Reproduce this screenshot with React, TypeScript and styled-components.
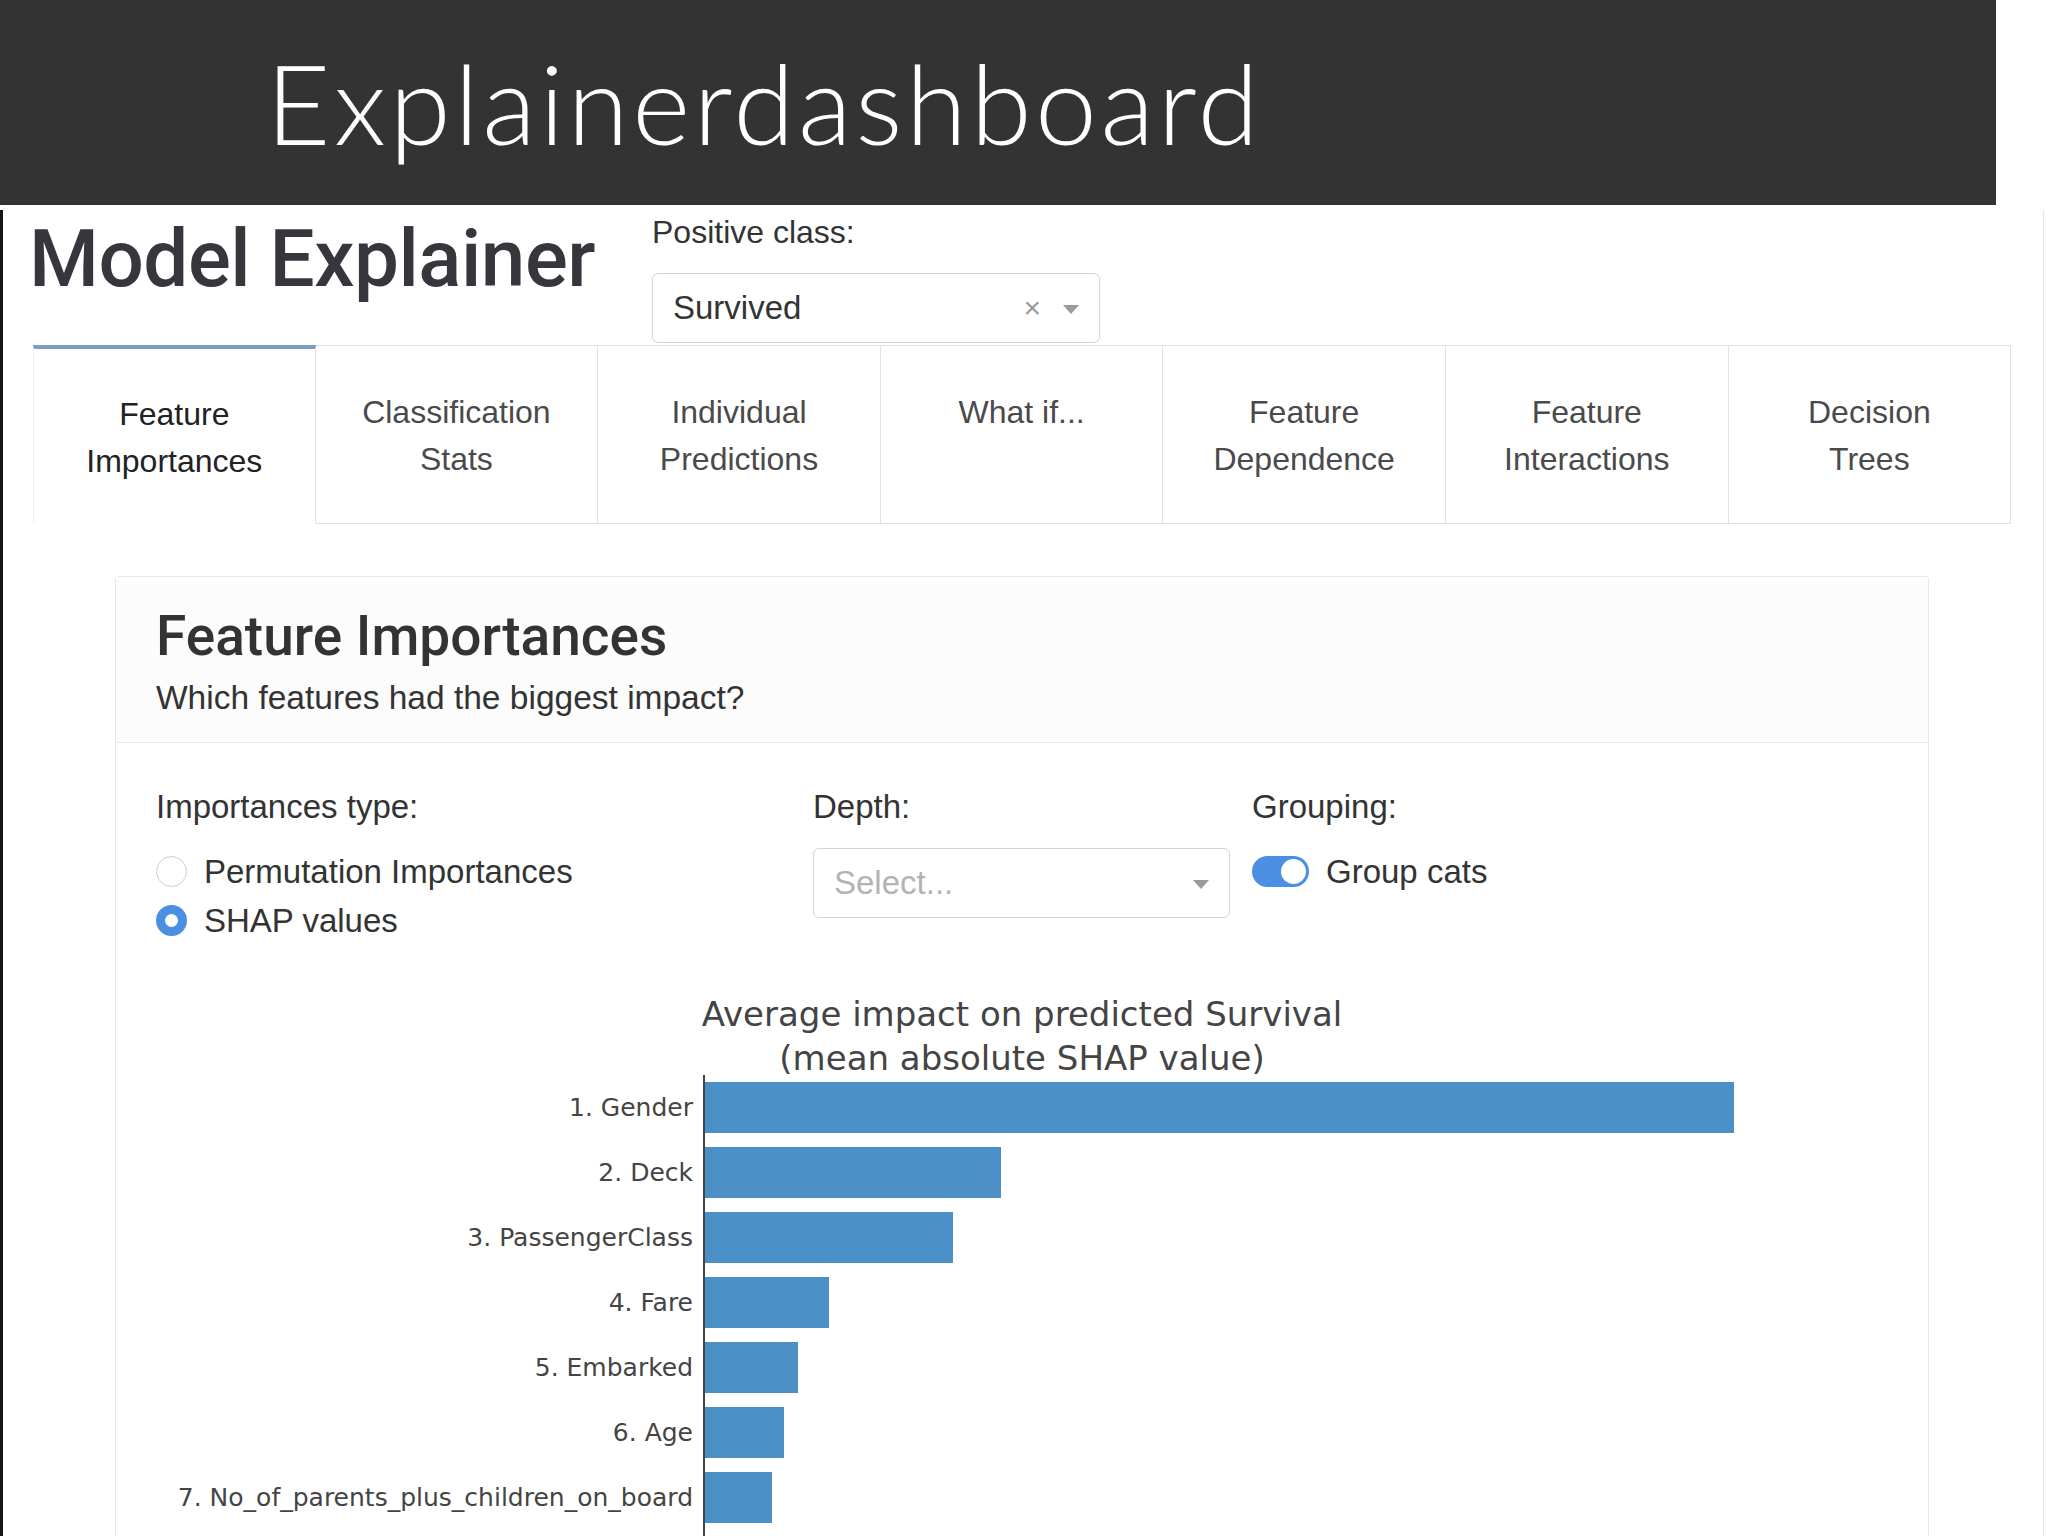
import styled, { createGlobalStyle } from 'styled-components'

const GlobalStyle = createGlobalStyle`
  html, body {
    margin: 0;
    padding: 0;
  }
  body {
    width: 2048px;
    height: 1536px;
    overflow: hidden;
    background: #fff;
    font-family: "Liberation Sans", Arial, sans-serif;
    color: #333;
  }
  * {
    box-sizing: border-box;
  }
`

const Banner = styled.header`
  width: 1996px;
  height: 205px;
  background: #333333;
  display: flex;
  align-items: center;
  padding-left: 266px;
`

const BannerTitle = styled.h1`
  margin: 0;
  font-family: Lato, "Open Sans", sans-serif;
  font-weight: 300;
  font-size: 111px;
  line-height: 1;
  color: #fff;
  letter-spacing: 3.5px;
`

const Page = styled.main`
  width: 2044px;
  height: 1331px;
  margin-top: 5px;
  padding: 3px 0 0 30px;
  border-left: 3px solid #161616;
  border-right: 1px solid #e6e6e6;
  overflow: hidden;
`

const TopRow = styled.div`
  display: flex;
  align-items: flex-start;
  height: 132px;
`

const AppTitle = styled.h2`
  width: 623px;
  margin: 6px 0 0 -4px;
  font-family: Roboto, "Liberation Sans", sans-serif;
  font-weight: 500;
  font-size: 80px;
  line-height: 80px;
  color: #35373c;
  letter-spacing: -0.5px;
`

const FormGroup = styled.div`
  display: flex;
  flex-direction: column;
`

const Label = styled.label`
  font-size: 32px;
  line-height: 38px;
  color: #333;
`

const SelectBox = styled.div<{ $width: number; $mt: number }>`
  width: ${(p) => p.$width}px;
  height: 70px;
  margin-top: ${(p) => p.$mt}px;
  border: 1px solid #d3d3d3;
  border-radius: 6px;
  display: flex;
  align-items: center;
  padding: 0 20px;
  background: #fff;
`

const SelectValue = styled.span<{ $placeholder?: boolean }>`
  flex: 1;
  font-size: 33px;
  color: ${(p) => (p.$placeholder ? '#b3b3b3' : '#333')};
`

const ClearMark = styled.span`
  font-size: 30px;
  color: #9a9a9a;
  margin-right: 22px;
`

const Caret = styled.span`
  width: 0;
  height: 0;
  border-left: 8px solid transparent;
  border-right: 8px solid transparent;
  border-top: 9px solid #9a9a9a;
  margin-top: 3px;
`

const Tabs = styled.nav`
  display: grid;
  grid-template-columns: repeat(7, 282.6px);
`

const Tab = styled.div<{ $active?: boolean; $first?: boolean }>`
  height: 179px;
  padding-top: ${(p) => (p.$active ? 42 : 43)}px;
  text-align: center;
  font-size: 32px;
  line-height: 47px;
  color: ${(p) => (p.$active ? '#222' : '#4a4a4a')};
  border-top: ${(p) => (p.$active ? '4px solid #7a9cc2' : '1px solid #e1e1e1')};
  border-right: 1px solid #e1e1e1;
  border-bottom: ${(p) => (p.$active ? '1px solid transparent' : '1px solid #e1e1e1')};
  border-left: ${(p) => (p.$first ? '1px solid #efefef' : 'none')};
`

const Card = styled.section`
  width: 1814px;
  margin: 52px 0 0 82px;
  height: 1100px;
  border: 1px solid #e8e8e8;
  border-bottom: none;
  border-radius: 4px 4px 0 0;
`

const CardHeader = styled.div`
  padding: 26px 40px 24px;
  background: #fcfcfc;
  border-bottom: 1px solid #e8e8e8;
`

const CardTitle = styled.h3`
  margin: 0;
  font-family: Roboto, "Liberation Sans", sans-serif;
  font-weight: 500;
  font-size: 55px;
  line-height: 66px;
  color: #333;
`

const CardSubtitle = styled.div`
  margin-top: 9px;
  font-size: 33.5px;
  line-height: 40px;
  color: #333;
`

const CardBody = styled.div`
  padding: 44px 40px 0;
`

const Controls = styled.div`
  display: grid;
  grid-template-columns: 657px 439px 1fr;
`

const Column = styled.div`
  display: flex;
  flex-direction: column;
`

const ControlLabel = styled.div`
  font-size: 33px;
  line-height: 40px;
  color: #333;
  margin-bottom: 20px;
`

const OptionRow = styled.div`
  display: flex;
  align-items: center;
  gap: 17px;
  height: 49px;
  font-size: 33px;
  color: #333;
`

const Radio = styled.span<{ $checked?: boolean }>`
  width: 31px;
  height: 31px;
  border-radius: 50%;
  background: #fff;
  border: ${(p) => (p.$checked ? '9px solid #4a8fe2' : '1.5px solid #cfcfcf')};
`

const Toggle = styled.span`
  position: relative;
  width: 57px;
  height: 31px;
  border-radius: 16px;
  background: #4a8fe2;
  &::after {
    content: '';
    position: absolute;
    top: 3px;
    right: 3px;
    width: 25px;
    height: 25px;
    border-radius: 50%;
    background: #fff;
  }
`

const Chart = styled.div`
  margin-top: 47px;
  font-family: "DejaVu Sans", Verdana, sans-serif;
  color: #444;
`

const ChartTitle = styled.div`
  margin-bottom: -5px;
`

const ChartTitleLine = styled.div`
  text-align: center;
  font-size: 34px;
  line-height: 44px;
  color: #444;
`

const BarRow = styled.div<{ $filler?: boolean }>`
  display: grid;
  grid-template-columns: 537px 1fr;
  column-gap: 10px;
  height: ${(p) => (p.$filler ? 40 : 65)}px;
`

const BarLabel = styled.div`
  height: 51px;
  margin-top: 7px;
  display: flex;
  align-items: center;
  justify-content: flex-end;
  font-size: 25px;
  color: #444;
  white-space: nowrap;
`

const BarCell = styled.div`
  border-left: 2px solid #444;
  padding-top: 7px;
`

const Bar = styled.div`
  height: 51px;
  background: #4a8fc6;
`

const tabs = [
  ['Feature', 'Importances'],
  ['Classification', 'Stats'],
  ['Individual', 'Predictions'],
  ['What if...'],
  ['Feature', 'Dependence'],
  ['Feature', 'Interactions'],
  ['Decision', 'Trees'],
]

const importances = [
  { name: 'Gender', value: 0.174 },
  { name: 'Deck', value: 0.05 },
  { name: 'PassengerClass', value: 0.042 },
  { name: 'Fare', value: 0.021 },
  { name: 'Embarked', value: 0.0158 },
  { name: 'Age', value: 0.0133 },
  { name: 'No_of_parents_plus_children_on_board', value: 0.0113 },
]

const AXIS_MAX = 0.2

export default function App() {
  return (
    <>
      <GlobalStyle />
      <Banner>
        <BannerTitle>Explainerdashboard</BannerTitle>
      </Banner>

      <Page>
        <TopRow>
          <AppTitle>Model Explainer</AppTitle>
          <FormGroup>
            <Label>Positive class:</Label>
            <SelectBox $width={448} $mt={22}>
              <SelectValue>Survived</SelectValue>
              <ClearMark>×</ClearMark>
              <Caret />
            </SelectBox>
          </FormGroup>
        </TopRow>

        <Tabs>
          {tabs.map((lines, i) => (
            <Tab key={i} $active={i === 0} $first={i === 0}>
              {lines.map((l) => (
                <div key={l}>{l}</div>
              ))}
            </Tab>
          ))}
        </Tabs>

        <Card>
          <CardHeader>
            <CardTitle>Feature Importances</CardTitle>
            <CardSubtitle>Which features had the biggest impact?</CardSubtitle>
          </CardHeader>

          <CardBody>
            <Controls>
              <Column>
                <ControlLabel>Importances type:</ControlLabel>
                <OptionRow>
                  <Radio />
                  Permutation Importances
                </OptionRow>
                <OptionRow>
                  <Radio $checked />
                  SHAP values
                </OptionRow>
              </Column>
              <Column>
                <ControlLabel>Depth:</ControlLabel>
                <SelectBox $width={417} $mt={1}>
                  <SelectValue $placeholder>Select...</SelectValue>
                  <Caret />
                </SelectBox>
              </Column>
              <Column>
                <ControlLabel>Grouping:</ControlLabel>
                <OptionRow>
                  <Toggle />
                  Group cats
                </OptionRow>
              </Column>
            </Controls>

            <Chart>
              <ChartTitle>
                <ChartTitleLine>Average impact on predicted Survival</ChartTitleLine>
                <ChartTitleLine>(mean absolute SHAP value)</ChartTitleLine>
              </ChartTitle>
              {importances.map((f, i) => (
                <BarRow key={f.name}>
                  <BarLabel>
                    {i + 1}. {f.name}
                  </BarLabel>
                  <BarCell>
                    <Bar style={{ width: `${(f.value / AXIS_MAX) * 100}%` }} />
                  </BarCell>
                </BarRow>
              ))}
              <BarRow $filler>
                <div />
                <BarCell />
              </BarRow>
            </Chart>
          </CardBody>
        </Card>
      </Page>
    </>
  )
}
